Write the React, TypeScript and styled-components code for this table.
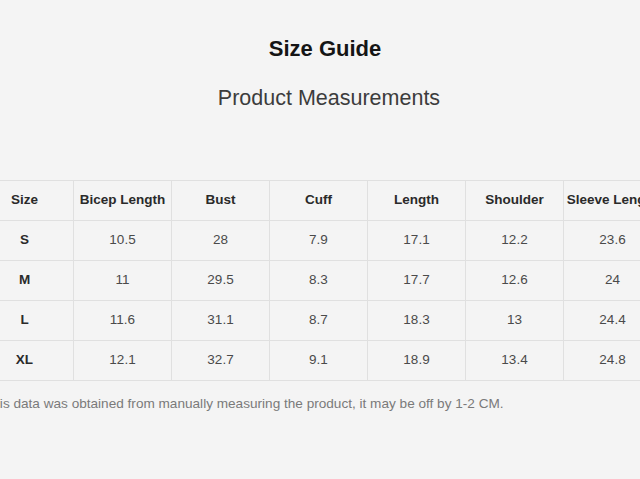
import React from "react";
import styled, { createGlobalStyle } from "styled-components";

const GlobalStyle = createGlobalStyle`
  html, body {
    margin: 0;
    padding: 0;
    background: #f4f4f4;
    overflow: hidden;
  }
  body {
    font-family: "Liberation Sans", Arial, sans-serif;
  }
`;

const headers = [
  "Size",
  "Bicep Length",
  "Bust",
  "Cuff",
  "Length",
  "Shoulder",
  "Sleeve Length",
];

const rows: string[][] = [
  ["S", "10.5", "28", "7.9", "17.1", "12.2", "23.6"],
  ["M", "11", "29.5", "8.3", "17.7", "12.6", "24"],
  ["L", "11.6", "31.1", "8.7", "18.3", "13", "24.4"],
  ["XL", "12.1", "32.7", "9.1", "18.9", "13.4", "24.8"],
];

const App = () => {
  return (
    <>
      <GlobalStyle />
      <Page>
        <Title>Size Guide</Title>
        <Subtitle>Product Measurements</Subtitle>
        <Table>
          <thead>
            <tr>
              {headers.map((h) => (
                <HeadCell key={h}>{h}</HeadCell>
              ))}
            </tr>
          </thead>
          <tbody>
            {rows.map((row) => (
              <tr key={row[0]}>
                {row.map((value, i) => (
                  <Cell key={i} $label={i === 0}>
                    {value}
                  </Cell>
                ))}
              </tr>
            ))}
          </tbody>
        </Table>
        <Note>
          This data was obtained from manually measuring the product, it may be
          off by 1-2 CM.
        </Note>
      </Page>
    </>
  );
};

const Page = styled.div`
  width: 640px;
  height: 479px;
  display: flex;
  flex-direction: column;
  align-items: flex-start;
  padding-top: 36px;
  box-sizing: border-box;
`;

const Title = styled.h1`
  align-self: stretch;
  margin: 0 0 0 10px;
  text-align: center;
  font-size: 22px;
  line-height: 26px;
  font-weight: 700;
  color: #151515;
`;

const Subtitle = styled.h2`
  align-self: stretch;
  margin: 23px 0 0 18px;
  text-align: center;
  font-size: 21.5px;
  line-height: 26px;
  font-weight: 400;
  color: #3c3c3c;
`;

const Table = styled.table`
  margin: 69px 0 0 -25px;
  border-collapse: collapse;
  table-layout: fixed;
  width: 680px;
  flex-shrink: 0;
`;

const HeadCell = styled.th`
  width: 97px;
  height: 37px;
  padding: 0 0 2px;
  border: 1px solid #e0e0e0;
  text-align: center;
  font-size: 13.5px;
  font-weight: 700;
  color: #2a2a2a;
  white-space: nowrap;
  overflow: hidden;
`;

const Cell = styled.td<{ $label: boolean }>`
  height: 37px;
  padding: 0 0 2px;
  border: 1px solid #e0e0e0;
  text-align: center;
  font-size: 13.5px;
  font-weight: ${({ $label }) => ($label ? 700 : 400)};
  color: ${({ $label }) => ($label ? "#2a2a2a" : "#4a4a4a")};
`;

const Note = styled.p`
  margin: 15px 0 0 -16px;
  font-size: 13.6px;
  line-height: 16px;
  color: #7a7a7a;
  white-space: nowrap;
`;

export default App;
